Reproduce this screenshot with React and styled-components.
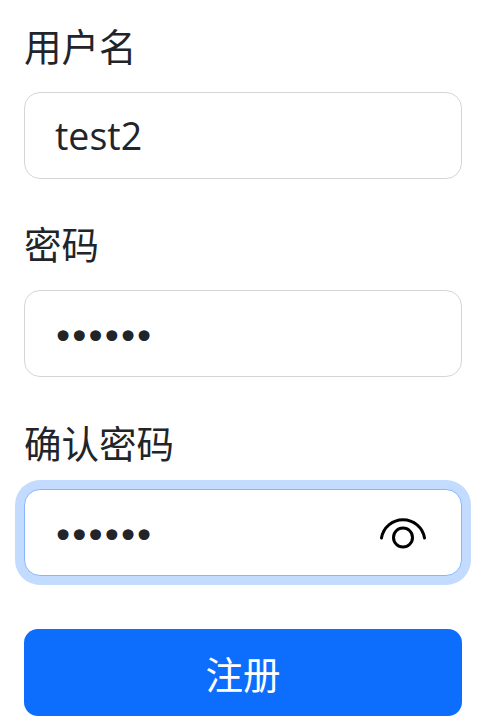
import React from 'react';
import styled, { createGlobalStyle } from 'styled-components';

const GlobalStyle = createGlobalStyle`
  html, body {
    margin: 0;
    background: #fff;
  }
  body {
    font-family: "Open Sans", "Noto Sans CJK SC", sans-serif;
    color: #212529;
  }
`;

const Form = styled.form`
  display: flex;
  flex-direction: column;
  padding: 20px 33px 0 24px;
`;

const Field = styled.div`
  display: flex;
  flex-direction: column;
  margin-bottom: ${(p) => p.$gap}px;
`;

const Label = styled.label`
  font-size: 37.5px;
  line-height: 54px;
  margin-bottom: 18px;
`;

const InputWrap = styled.div`
  position: relative;
`;

const Input = styled.input`
  display: block;
  width: 100%;
  height: 87px;
  box-sizing: border-box;
  padding: 0 30px;
  font-family: inherit;
  font-size: 37.5px;
  color: #212529;
  background: #fff;
  border: 1px solid ${(p) => (p.$focused ? '#86b7fe' : '#d3d6d9')};
  border-radius: 16px;
  outline: none;
  box-shadow: ${(p) => (p.$focused ? '0 0 0 9px rgba(13, 110, 253, 0.25)' : 'none')};

  &[type='password'] {
    padding: 7px 27px 0;
    font-family: "DejaVu Sans", sans-serif;
    letter-spacing: -5.9px;
  }
`;

const EyeIcon = styled.svg`
  position: absolute;
  top: 28px;
  right: 35px;
  width: 48px;
  height: 34px;
`;

const Submit = styled.button`
  height: 87px;
  font-family: inherit;
  font-size: 37.5px;
  color: #fff;
  background: #0d6efd;
  border: 0;
  border-radius: 14px;
`;

const App = () => (
  <>
    <GlobalStyle />
    <Form onSubmit={(e) => e.preventDefault()}>
      <Field $gap={39}>
        <Label>用户名</Label>
        <Input type="text" defaultValue="test2" />
      </Field>
      <Field $gap={40}>
        <Label>密码</Label>
        <Input type="password" defaultValue="123456" />
      </Field>
      <Field $gap={53}>
        <Label>确认密码</Label>
        <InputWrap>
          <Input type="password" defaultValue="123456" $focused />
          <EyeIcon viewBox="0 0 48 34" fill="none" stroke="#000" strokeWidth="3" strokeLinecap="round">
            <path d="M2.5 21A21.8 21.8 0 0 1 45.5 21" />
            <circle cx="24" cy="20.5" r="9.5" />
          </EyeIcon>
        </InputWrap>
      </Field>
      <Submit type="submit">注册</Submit>
    </Form>
  </>
);

export default App;
